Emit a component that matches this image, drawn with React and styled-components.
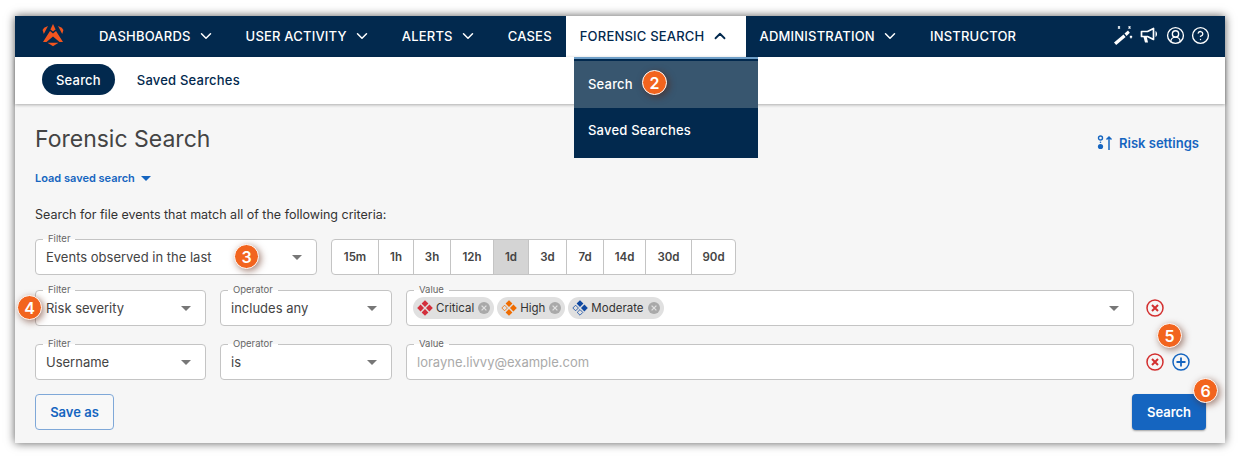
import React from "react";
import styled, { createGlobalStyle } from "styled-components";
import { ChevronDown, ChevronUp, CircleHelp, CircleUserRound } from "lucide-react";

const NAVY = "#02294e";
const BLUE = "#1565c0";
const FONT = `"Inter", "Open Sans", Arial, sans-serif`;

const Global = createGlobalStyle`
  html, body { margin: 0; padding: 0; background: #fff; font-family: ${FONT}; }
  * { box-sizing: border-box; }
`;

const Frame = styled.div`
  position: relative;
  width: 1210px;
  height: 427px;
  margin: 16px 15px 15px;
  background: #f6f6f6;
  box-shadow: 0 0 9px rgba(0, 0, 0, 0.65);
  display: flex;
  flex-direction: column;
`;

const Nav = styled.nav`
  height: 41px;
  background: ${NAVY};
  display: flex;
  align-items: stretch;
  padding-right: 15px;
  flex: none;
`;
const LogoBox = styled.div`
  width: 70px;
  display: flex;
  align-items: center;
  padding-left: 26px;
  padding-bottom: 3px;
`;
const NavItem = styled.div`
  display: flex;
  align-items: center;
  padding: 0 14px 2px;
  color: ${(p) => (p.$active ? NAVY : "#fff")};
  background: ${(p) => (p.$active ? "#fff" : "transparent")};
  font-size: 13px;
  font-weight: 500;
  letter-spacing: 0.2px;
  white-space: nowrap;
  & svg { margin-left: 3px; }
`;
const NavIcons = styled.div`
  margin-left: auto;
  display: flex;
  align-items: center;
  gap: 6px;
  padding-bottom: 3px;
  color: #fff;
`;

const SubNav = styled.div`
  height: 47px;
  background: #fff;
  box-shadow: 0 1px 3px rgba(0, 0, 0, 0.3);
  display: flex;
  align-items: center;
  padding: 0 27px 2px;
  gap: 22px;
  flex: none;
`;
const Pill = styled.div`
  height: 31px;
  border-radius: 16px;
  background: ${(p) => (p.$active ? NAVY : "transparent")};
  color: ${(p) => (p.$active ? "#fff" : NAVY)};
  padding: ${(p) => (p.$active ? "0 14px" : "0")};
  font-size: 13px;
  font-weight: 500;
  letter-spacing: 0.2px;
  display: flex;
  align-items: center;
`;

const Menu = styled.div`
  position: absolute;
  left: 559px;
  top: 41px;
  width: 184px;
  height: 101px;
  background: ${NAVY};
  border-top: 2px solid #6f9fc8;
  padding-top: 2px;
`;
const MenuItem = styled.div`
  height: ${(p) => (p.$active ? "47px" : "50px")};
  padding: 0 14px ${(p) => (p.$active ? "2px" : "6px")};
  display: flex;
  align-items: center;
  font-size: 13px;
  font-weight: 500;
  letter-spacing: 0.2px;
  color: #fff;
  background: ${(p) => (p.$active ? "#38566f" : "transparent")};
`;

const Main = styled.main`
  flex: 1;
  padding: 19px 19px 13px 20px;
  display: flex;
  flex-direction: column;
`;
const Header = styled.div`
  display: flex;
  align-items: center;
  justify-content: space-between;
  height: 32px;
`;
const Title = styled.h1`
  margin: 0;
  font-size: 23px;
  line-height: 32px;
  font-weight: 400;
  color: #444;
`;
const RiskLink = styled.a`
  display: flex;
  align-items: center;
  gap: 6px;
  margin: 7px 7px 0 0;
  color: ${BLUE};
  font-size: 13px;
  font-weight: 600;
`;
const LoadLink = styled.a`
  display: flex;
  align-items: center;
  gap: 6px;
  margin-top: 14px;
  height: 18px;
  color: ${BLUE};
  font-size: 11px;
  font-weight: 600;
`;
const Caret = styled.span`
  width: 0;
  height: 0;
  border-left: 5px solid transparent;
  border-right: 5px solid transparent;
  border-top: 5px solid ${(p) => p.$color || "#777"};
  flex: none;
`;
const Lead = styled.p`
  margin: 19px 0 0;
  height: 18px;
  line-height: 18px;
  font-size: 12.5px;
  color: #333;
`;
const Row = styled.div`
  display: flex;
  align-items: center;
  gap: 14px;
  margin-top: ${(p) => p.$mt}px;
`;
const Field = styled.div`
  position: relative;
  width: ${(p) => p.$w}px;
  flex: none;
  height: 36px;
  background: #fff;
  border: 1px solid #c4c4c4;
  border-radius: 4px;
  display: flex;
  align-items: center;
  padding: 0 14px 0 10px;
  font-size: 13px;
  color: #444;
`;
const FieldLabel = styled.label`
  position: absolute;
  left: 7px;
  top: -7px;
  padding: 0 5px;
  height: 12px;
  line-height: 12px;
  font-size: 9.5px;
  color: #666;
  background: linear-gradient(#f6f6f6 50%, #fff 50%);
`;
const FieldText = styled.span`
  flex: 1;
  white-space: nowrap;
  color: ${(p) => (p.$placeholder ? "#aaa" : "inherit")};
`;
const Segments = styled.div`
  display: flex;
  height: 36px;
  background: #fff;
  border: 1px solid #c4c4c4;
  border-radius: 4px;
  overflow: hidden;
`;
const Segment = styled.div`
  width: ${(p) => p.$w}px;
  display: flex;
  align-items: center;
  justify-content: center;
  font-size: 11.5px;
  font-weight: 600;
  color: #444;
  background: ${(p) => (p.$active ? "#d4d4d4" : "transparent")};
  & + & { border-left: 1px solid #c4c4c4; }
`;
const Chips = styled.div`
  display: flex;
  flex: 1;
  gap: 3px;
  margin-left: -4px;
  padding-bottom: 1px;
`;
const Chip = styled.div`
  height: 22px;
  padding: 0 3px 0 4px;
  border-radius: 11px;
  background: #e0e0e0;
  display: flex;
  align-items: center;
  gap: 3px;
  font-size: 11.5px;
  color: #333;
`;
const IconSlot = styled.div`
  display: flex;
  align-items: center;
  gap: 8px;
  margin-left: -2px;
  width: 46px;
`;
const Footer = styled.div`
  display: flex;
  justify-content: space-between;
  margin-top: 14px;
`;
const SaveButton = styled.button`
  width: 79px;
  height: 36px;
  background: #f8f8f8;
  border: 1px solid #7fa8d8;
  border-radius: 4px;
  color: ${BLUE};
  font-family: inherit;
  font-size: 13px;
  font-weight: 600;
`;
const SearchButton = styled.button`
  width: 74px;
  height: 36px;
  background: ${BLUE};
  border: none;
  border-radius: 4px;
  box-shadow: 0 1px 2px rgba(0, 0, 0, 0.35);
  color: #fff;
  font-family: inherit;
  font-size: 13px;
  font-weight: 600;
`;
const Badge = styled.div`
  position: absolute;
  left: ${(p) => p.$x - 15 - 12}px;
  top: ${(p) => p.$y - 16 - 12}px;
  width: 25px;
  height: 25px;
  border-radius: 50%;
  background: #f2641e;
  border: 1.5px solid #fff;
  color: #fff;
  font-size: 16px;
  font-weight: 600;
  display: flex;
  align-items: center;
  justify-content: center;
  box-shadow: 2px 2px 7px rgba(90, 30, 10, 0.55);
  z-index: 5;
`;

const Logo = () => (
  <svg width="24" height="24" viewBox="0 0 24 24">
    <path d="M12 1 L14.6 6.4 L12 8.6 L9.4 6.4 Z" fill="#f1551f" />
    <path d="M9 8 L2 19 L5.5 19 L12 13.5 L18.5 19 L22 19 L15 8 L12 10.6 Z" fill="#f1551f" />
    <path d="M3.2 4.8 L7 3 L2.8 11 L1.6 7 Z" fill="#f1551f" />
    <path d="M20.8 4.8 L17 3 L21.2 11 L22.4 7 Z" fill="#f1551f" />
    <path d="M6.5 19.8 L17.5 19.8 L12 23.2 Z" fill="#f1551f" />
  </svg>
);
const Wand = () => (
  <svg width="21" height="21" viewBox="0 0 21 21" fill="none">
    <path d="M1 17.5 L10.5 9.5 L12.6 12 L3.2 20 Z" fill="#fff" />
    <path d="M11.5 8.5 L15 5.6 L16.8 7.8 L13.6 11 Z" fill="#fff" />
    <path d="M5 1.5l2 2M7 1.5l-2 2M15.5 1.5l2 2M17.5 1.5l-2 2M17 11l2 2M19 11l-2 2" stroke="#fff" strokeWidth="1.1" />
  </svg>
);
const Megaphone = () => (
  <svg width="20" height="18" viewBox="0 0 20 18" fill="none">
    <path d="M1.5 5.5 H7.5 L13.5 2.5 V13.5 L7.5 10.5 H1.5 Z" stroke="#fff" strokeWidth="1.7" strokeLinejoin="round" />
    <path d="M3.5 11 L5 16.5 H8 L6.8 11 Z" fill="#fff" />
    <path d="M15.5 5 C17.5 6 17.5 10 15.5 11 Z" fill="#fff" />
  </svg>
);
const RiskIcon = () => (
  <svg width="16" height="16" viewBox="0 0 16 16" fill="none" stroke={BLUE}>
    <circle cx="3.5" cy="3" r="2" strokeWidth="1.4" />
    <circle cx="3.5" cy="11.5" r="2.6" fill={BLUE} stroke="none" />
    <circle cx="3.5" cy="7.2" r="0.8" fill={BLUE} stroke="none" />
    <path d="M12 15 V2 M9.5 4.5 L12 2 L14.5 4.5" strokeWidth="1.5" />
  </svg>
);
const Diamonds = ({ color, outlined = [] }) => {
  const spots = [
    ["top", 8, 3.6],
    ["right", 12.4, 8],
    ["bottom", 8, 12.4],
    ["left", 3.6, 8],
  ];
  return (
    <svg width="16" height="16" viewBox="0 0 16 16">
      {spots.map(([name, x, y]) => {
        const open = outlined.includes(name);
        const r = open ? 2.8 : 3.4;
        return (
          <path
            key={name}
            d={`M${x} ${y - r}L${x + r} ${y}L${x} ${y + r}L${x - r} ${y}Z`}
            fill={open ? "none" : color}
            stroke={open ? color : "none"}
            strokeWidth="0.8"
          />
        );
      })}
    </svg>
  );
};
const ChipClose = () => (
  <svg width="14" height="14" viewBox="0 0 14 14">
    <circle cx="7" cy="7" r="6" fill="#a9a9a9" />
    <path d="M4.6 4.6l4.8 4.8M9.4 4.6l-4.8 4.8" stroke="#e0e0e0" strokeWidth="1.3" />
  </svg>
);
const RemoveIcon = () => (
  <svg width="18" height="18" viewBox="0 0 18 18" fill="none">
    <circle cx="9" cy="9" r="8" stroke="#d32f2f" strokeWidth="1.5" />
    <path d="M6 6l6 6M12 6l-6 6" stroke="#d32f2f" strokeWidth="2" />
  </svg>
);
const AddIcon = () => (
  <svg width="18" height="18" viewBox="0 0 18 18" fill="none">
    <circle cx="9" cy="9" r="8" stroke={BLUE} strokeWidth="1.5" />
    <path d="M9 4.5v9M4.5 9h9" stroke={BLUE} strokeWidth="1.8" />
  </svg>
);

const navItems = [
  ["DASHBOARDS", "down"],
  ["USER ACTIVITY", "down"],
  ["ALERTS", "down"],
  ["CASES"],
  ["FORENSIC SEARCH", "up", true],
  ["ADMINISTRATION", "down"],
  ["INSTRUCTOR"],
];
const ranges = [
  ["15m", 46], ["1h", 35], ["3h", 37], ["12h", 43], ["1d", 35],
  ["3d", 38], ["7d", 37], ["14d", 42], ["30d", 46], ["90d", 44],
];

const SelectField = ({ label, value, w }) => (
  <Field $w={w}>
    <FieldLabel>{label}</FieldLabel>
    <FieldText>{value}</FieldText>
    <Caret />
  </Field>
);

export default function App() {
  return (
    <>
      <Global />
      <Frame>
        <Nav>
          <LogoBox><Logo /></LogoBox>
          {navItems.map(([name, dir, active]) => (
            <NavItem key={name} $active={active}>
              {name}
              {dir === "down" && <ChevronDown size={24} strokeWidth={2} style={{ transform: "scale(.75)" }} />}
              {dir === "up" && <ChevronUp size={24} strokeWidth={2.4} style={{ transform: "scale(.75)" }} />}
            </NavItem>
          ))}
          <NavIcons>
            <Wand />
            <Megaphone />
            <CircleUserRound size={19} strokeWidth={1.7} />
            <CircleHelp size={19} strokeWidth={1.7} />
          </NavIcons>
        </Nav>
        <SubNav>
          <Pill $active>Search</Pill>
          <Pill>Saved Searches</Pill>
        </SubNav>
        <Menu>
          <MenuItem $active>Search</MenuItem>
          <MenuItem>Saved Searches</MenuItem>
        </Menu>
        <Main>
          <Header>
            <Title>Forensic Search</Title>
            <RiskLink><RiskIcon />Risk settings</RiskLink>
          </Header>
          <LoadLink>Load saved search <Caret $color={BLUE} /></LoadLink>
          <Lead>Search for file events that match all of the following criteria:</Lead>
          <Row $mt={15}>
            <SelectField label="Filter" value="Events observed in the last" w={282} />
            <Segments>
              {ranges.map(([r, w]) => (
                <Segment key={r} $w={w} $active={r === "1d"}>{r}</Segment>
              ))}
            </Segments>
          </Row>
          <Row $mt={15}>
            <SelectField label="Filter" value="Risk severity" w={171} />
            <SelectField label="Operator" value="includes any" w={172} />
            <Field $w={728}>
              <FieldLabel>Value</FieldLabel>
              <Chips>
                <Chip><Diamonds color="#d32f3c" />Critical<ChipClose /></Chip>
                <Chip><Diamonds color="#ef6c00" outlined={["left"]} />High<ChipClose /></Chip>
                <Chip><Diamonds color="#0d47a1" outlined={["left", "bottom"]} />Moderate<ChipClose /></Chip>
              </Chips>
              <Caret />
            </Field>
            <IconSlot><RemoveIcon /></IconSlot>
          </Row>
          <Row $mt={18}>
            <SelectField label="Filter" value="Username" w={171} />
            <SelectField label="Operator" value="is" w={172} />
            <Field $w={728}>
              <FieldLabel>Value</FieldLabel>
              <FieldText $placeholder>lorayne.livvy@example.com</FieldText>
            </Field>
            <IconSlot><RemoveIcon /><AddIcon /></IconSlot>
          </Row>
          <Footer>
            <SaveButton>Save as</SaveButton>
            <SearchButton>Search</SearchButton>
          </Footer>
        </Main>
        <Badge $x={654} $y={82}>2</Badge>
        <Badge $x={246} $y={256}>3</Badge>
        <Badge $x={29} $y={307}>4</Badge>
        <Badge $x={1169} $y={335}>5</Badge>
        <Badge $x={1205} $y={390}>6</Badge>
      </Frame>
    </>
  );
}
